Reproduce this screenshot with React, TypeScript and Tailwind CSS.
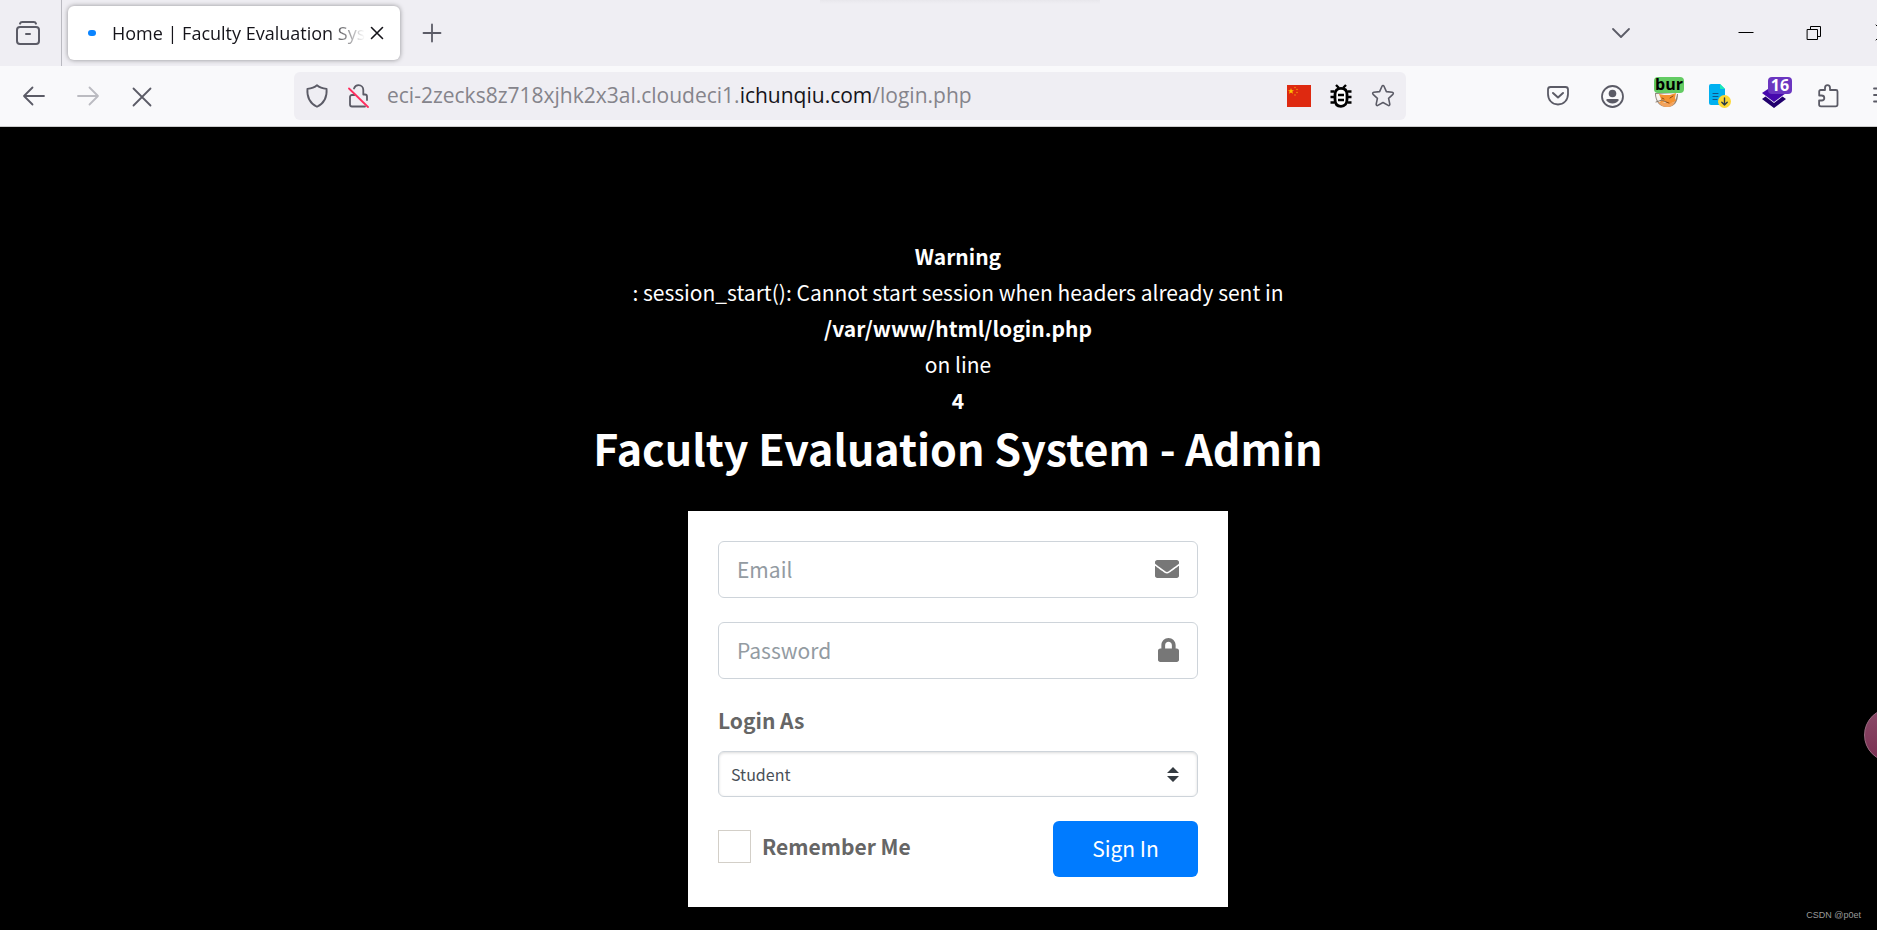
import React from "react";
import { FaEnvelope, FaLock } from "react-icons/fa";

const warningLines = [
  { text: "Warning", bold: true },
  { text: ": session_start(): Cannot start session when headers already sent in", bold: false },
  { text: "/var/www/html/login.php", bold: true },
  { text: "on line", bold: false },
  { text: "4", bold: true },
];

function Icon({ children, className = "" }: { children: React.ReactNode; className?: string }) {
  return (
    <svg
      viewBox="0 0 24 24"
      fill="none"
      stroke="currentColor"
      strokeWidth="2"
      strokeLinecap="round"
      strokeLinejoin="round"
      aria-hidden="true"
      className={`h-6 w-6 shrink-0 ${className}`}
    >
      {children}
    </svg>
  );
}

function ToolButton({ label, children }: { label: string; children: React.ReactNode }) {
  return (
    <button type="button" aria-label={label} className="relative flex h-12 w-[54px] shrink-0 items-center justify-center">
      {children}
    </button>
  );
}

function WindowButton({ label, children }: { label: string; children: React.ReactNode }) {
  return (
    <button type="button" aria-label={label} className="flex h-full w-[68px] shrink-0 items-center justify-center text-black">
      {children}
    </button>
  );
}

function TabBar() {
  return (
    <div className="flex h-[66px] items-center bg-[#efeef3] text-[#5b5b66]">
      <button type="button" aria-label="Recent browsing" className="flex h-full w-[62px] items-center border-r border-[#b9b9c0] pl-4">
        <Icon>
          <path d="M4 2.6C4.4 1.4 5 1 6.200 1h11.600c1.200 0 1.800.4 2.200 1.600" />
          <rect x="1" y="6" width="22" height="17" rx="3" />
          <path d="M10 13h4" />
        </Icon>
      </button>
      <div className="ml-1.5 flex h-[54px] w-[332px] items-center rounded-md bg-white pr-3 pl-5 shadow-[0_0_5px_rgba(0,0,0,0.4)]">
        <span className="h-1.5 w-2 shrink-0 rounded-full bg-[#0a84ff]" />
        <span className="ml-4 flex-1 bg-linear-to-r from-[#15141a] from-85% to-transparent bg-clip-text font-['Open_Sans','Noto_Sans',sans-serif] text-lg whitespace-nowrap text-transparent">
          Home | Faculty Evaluation Sys
        </span>
        <button type="button" aria-label="Close tab" className="text-[#15141a]">
          <Icon>
            <path d="M6.500 6.500l11 11M17.500 6.500l-11 11" strokeWidth="1.600" />
          </Icon>
        </button>
      </div>
      <button type="button" aria-label="New tab" className="ml-5">
        <Icon>
          <path d="M12 3.500v17M3.500 12h17" strokeWidth="1.800" />
        </Icon>
      </button>
      <div className="flex-1" />
      <div className="mr-16 flex h-full items-center">
        <ToolButton label="List all tabs">
          <Icon>
            <path d="M4 8l8 8 8-8" strokeWidth="1.800" />
          </Icon>
        </ToolButton>
      </div>
      <WindowButton label="Minimize">
        <Icon>
          <path d="M5 11.500h14" strokeWidth="1" strokeLinecap="square" />
        </Icon>
      </WindowButton>
      <WindowButton label="Restore">
        <Icon>
          <path d="M5.500 8.500h10v10h-10zM8.500 8v-2.500h10v10h-2.500" strokeWidth="1" strokeLinejoin="miter" />
        </Icon>
      </WindowButton>
      <WindowButton label="Close window">
        <Icon>
          <path d="M6 4l15 15M21 4l-15 15" strokeWidth="1" />
        </Icon>
      </WindowButton>
    </div>
  );
}

function AddressBar() {
  return (
    <div className="mx-[125px] flex h-12 flex-1 items-center rounded-md bg-[#efeef3] pr-[11px] pl-[11px]">
      <Icon className="mr-[18px]">
        <path d="M12 1.200c2.500 2.200 6 3.200 9.600 3.600.5 7-1.600 14.200-9.600 18-8-3.800-10.100-11-9.600-18C6 4.400 9.500 3.400 12 1.200z" strokeWidth="1.800" />
      </Icon>
      <Icon>
        <path d="M7 4.500C7.700 2.500 9.200 1.200 11.500 1.200c2.800 0 4.800 2 4.800 4.800v4.500h1.700c1.300 0 2 .7 2 2v3.500M7.500 11H5c-1.300 0-2 .7-2 2v7.500c0 1.300.7 2 2 2h13" strokeWidth="1.800" />
        <path d="M2 4.500l19 18.500" stroke="#ff2e5f" strokeWidth="1.800" />
      </Icon>
      {/* highlighted host over the editable field */}
      <div className="relative ml-4 h-12 flex-1 font-['Open_Sans','Noto_Sans',sans-serif] text-[21px]">
        <input aria-label="Address" className="h-full w-full bg-transparent text-transparent outline-none" />
        <div className="pointer-events-none absolute inset-0 flex items-center whitespace-nowrap text-[#85848b]">
          eci-2zecks8z718xjhk2x3al.cloudeci1.<span className="text-[#15141a]">ichunqiu.com</span>/login.php
        </div>
      </div>
      <svg viewBox="0 0 24 22" className="h-[22px] w-6 shrink-0" aria-hidden="true">
        <path d="M0 0h24v22H0z" fill="#de2910" />
        <path d="M4 3l.8 2.200H7L5.300 6.600 6 8.800 4 7.500 2 8.800l.7-2.200L1 5.200h2.200z" fill="#ffc400" />
        <g fill="#f08c10">
          <circle cx="8" cy="2.500" r=".8" />
          <circle cx="10" cy="4.500" r=".8" />
          <circle cx="10" cy="7.500" r=".8" />
          <circle cx="8" cy="10" r=".8" />
        </g>
      </svg>
      <Icon className="mx-[18px] text-black">
        <path d="M7 1l3 3M17 1l-3 3M1.500 7.500h4M18.500 7.500h4M1.500 13h4M18.500 13h4M1.500 18.500h4M18.500 18.500h4" strokeWidth="2.400" strokeLinecap="butt" />
        <path d="M12 4.300c3.900 0 6 2.400 6 6v5c0 4.300-2.200 7-6 7s-6-2.700-6-7v-5c0-3.600 2.100-6 6-6z" strokeWidth="2.800" fill="white" />
        <path d="M9 11h6M9 16h6" strokeWidth="2.400" strokeLinecap="butt" />
      </Icon>
      <Icon>
        <path d="M11 2.200c.4-.9 1.600-.9 2 0l2.400 5.400 5.900.7c1 .1 1.400 1.300.6 2l-4.300 4 1.200 5.900c.2 1-.8 1.700-1.600 1.200L12 18.500l-5.200 2.900c-.8.500-1.800-.2-1.600-1.200l1.200-5.900-4.300-4c-.8-.7-.4-1.900.6-2l5.900-.7z" strokeWidth="1.600" />
      </Icon>
    </div>
  );
}

function Toolbar() {
  return (
    <div className="flex h-[61px] items-center border-b border-[#cccccc] bg-[#f9f9fb] px-[7px] text-[#5b5b66]">
      <ToolButton label="Back">
        <Icon>
          <path d="M22 12H2M10.500 3.500L2 12l8.500 8.500" strokeWidth="1.800" />
        </Icon>
      </ToolButton>
      <ToolButton label="Forward">
        <Icon className="text-[#bbbbc1]">
          <path d="M2 12h20M13.500 3.500L22 12l-8.500 8.500" strokeWidth="1.800" />
        </Icon>
      </ToolButton>
      <ToolButton label="Stop">
        <Icon>
          <path d="M3.500 4.500l17 17M20.500 4.500l-17 17" strokeWidth="1.800" />
        </Icon>
      </ToolButton>
      <AddressBar />
      <ToolButton label="Save to Pocket">
        <Icon>
          <path d="M4.500 3h15c1.600 0 2.500.9 2.500 2.500V10c0 6-4.200 10.500-10 10.500S2 16 2 10V5.500C2 3.900 2.900 3 4.500 3z" strokeWidth="1.800" />
          <path d="M7 9l5 4.500L17 9" />
        </Icon>
      </ToolButton>
      <ToolButton label="Account">
        <Icon>
          <circle cx="12.500" cy="12.500" r="10.500" strokeWidth="1.800" />
          <circle cx="12.500" cy="9.500" r="3.800" fill="currentColor" stroke="none" />
          <path d="M7.500 15h10c1.200 0 1.500.8 1 1.600-1.300 2-3.500 3-6 3s-4.700-1-6-3c-.5-.8-.2-1.600 1-1.600z" fill="currentColor" stroke="none" />
        </Icon>
      </ToolButton>
      <ToolButton label="FoxyProxy">
        <Icon>
          <g stroke="none">
            <path d="M1 9c0 8 4 14 12 14s11-6 11-13z" fill="#8d8378" />
            <path d="M2 10c0 7 4 11 11 12 6 0 9-5 10-12z" fill="#f7f3ee" />
            <path d="M4 18c2 3 5 5 9 5s7-2 8-5l-8 1z" fill="#f2a35e" />
            <path d="M5 10l5 1h6l6-2-1 5 1 3-7 3-3-2-6 1 1-4z" fill="#f59331" />
            <path d="M2 18l6-2 4 2" stroke="#8a7a6a" strokeWidth="1" />
            <path d="M8 14l2 1M16 14l3-2M12 18l3 1" stroke="#8a4b16" strokeWidth="1" />
          </g>
        </Icon>
        <span className="absolute top-[5px] left-[15px] h-4 w-[30px] rounded-sm bg-[#63cb63] text-center font-['Open_Sans',sans-serif] text-base leading-[14px] font-bold text-black">
          bur
        </span>
      </ToolButton>
      <ToolButton label="Downloader">
        <Icon>
          <g stroke="none">
            <path d="M3 0h9l5 5v14a2 2 0 0 1-2 2H3a2 2 0 0 1-2-2V2a2 2 0 0 1 2-2z" fill="#00b0f0" />
            <path d="M12 0l5 5h-4c-.7 0-1-.3-1-1z" fill="#1de9b6" />
            <circle cx="16.500" cy="17.500" r="6.500" fill="#fdd835" />
          </g>
          <path d="M5 9.500h5M5 12.500h5M5 15.500h4" stroke="#12548a" strokeWidth="1.200" />
          <path d="M16.500 14v7M13.800 18.300l2.700 2.700 2.700-2.700" stroke="#2a3a4a" strokeWidth="1.400" />
        </Icon>
      </ToolButton>
      <ToolButton label="Wappalyzer">
        <Icon>
          <g stroke="none">
            <path d="M0 15l3.500-2.500L12 19l8.500-6.500L24 15l-12 9z" fill="#21006d" />
            <path d="M0 9l12-8 12 8-12 9z" fill="#4608ad" />
          </g>
        </Icon>
        <span className="absolute top-[5px] left-[21px] h-[17px] w-6 rounded-sm bg-[#6b36c0] text-center font-['Open_Sans',sans-serif] text-base leading-4 font-bold text-white">
          16
        </span>
      </ToolButton>
      <ToolButton label="Extensions">
        <Icon>
          <path d="M3.200 7.500c0-1 .6-1.500 1.500-1.500H9V4c0-1.800 1-2.800 2.500-2.800S14 2.200 14 4v2h6c1 0 1.500.5 1.500 1.500v13c0 1.200-.7 1.900-1.900 1.900H5c-1.200 0-1.900-.7-1.900-1.900V16.500h2.400c1.800 0 2.800-1 2.800-2.500s-1-2.500-2.800-2.500H3.200z" strokeWidth="1.800" />
        </Icon>
      </ToolButton>
      <ToolButton label="Menu">
        <Icon>
          <path d="M4 4.500h17M4 11h17M4 17.500h17" strokeWidth="1.800" />
        </Icon>
      </ToolButton>
    </div>
  );
}

function LoginField({ type, label, children }: { type: string; label: string; children: React.ReactNode }) {
  return (
    <div className="mb-6 flex h-[57px] items-center rounded-md border border-[#ced4da] px-[18px] pb-0.5 text-[#777777]">
      <input
        type={type}
        aria-label={label}
        placeholder={label}
        className="h-full min-w-0 flex-1 outline-none placeholder:text-[#939ba2]"
      />
      {children}
    </div>
  );
}

function LoginCard() {
  return (
    <form className="w-[540px] bg-white p-[30px] text-[21px] leading-9 text-[#666666]" onSubmit={(e) => e.preventDefault()}>
      <LoginField type="email" label="Email">
        <FaEnvelope className="h-6 w-6" />
      </LoginField>
      <LoginField type="password" label="Password">
        <FaLock className="h-6 w-[21px]" />
      </LoginField>
      <label htmlFor="login-as" className="mb-3.5 block leading-[34px] font-bold">
        Login As
      </label>
      <div className="relative mb-6">
        <select
          id="login-as"
          className="block h-[46px] w-full appearance-none rounded-md border border-[#ced4da] bg-white px-3 text-base text-[#495057] shadow-[inset_0_1px_3px_rgba(0,0,0,0.15)] outline-none"
        >
          <option>Student</option>
          <option>Faculty</option>
          <option>Admin</option>
        </select>
        <svg viewBox="0 0 12 15" className="pointer-events-none absolute top-4 right-[19px] h-[15px] w-3" aria-hidden="true">
          <path d="M0 6l6-6 6 6zM0 9h12l-6 6z" fill="#343a40" />
        </svg>
      </div>
      <div className="flex h-14 items-center justify-between">
        <div className="flex items-center gap-[11px] pb-1.5">
          <input id="remember" type="checkbox" className="h-[33px] w-[33px] appearance-none border border-[#d3cfc8] bg-white" />
          <label htmlFor="remember" className="font-bold">
            Remember Me
          </label>
        </div>
        <button type="submit" className="h-14 w-[145px] rounded-md bg-[#007bff] pb-0.5 text-white">
          Sign In
        </button>
      </div>
    </form>
  );
}

export default function App() {
  return (
    <div className="relative min-h-screen overflow-hidden bg-black font-['Noto_Sans_CJK_SC',sans-serif]">
      {/* the window runs a little past the right edge */}
      <div className="-mr-[39px]">
        <header className="relative">
          <TabBar />
          <Toolbar />
          <div className="absolute top-0 left-[820px] h-1 w-[280px] bg-linear-to-b from-[#e8e7ec] to-[#efeef3]" />
        </header>
        <main className="flex flex-col items-center pt-[111px] pb-[23px] text-white">
          <div className="text-center text-[21px] leading-9">
            {warningLines.map((line) => (
              <p key={line.text} className={line.bold ? "font-bold" : ""}>
                {line.text}
              </p>
            ))}
          </div>
          <h2 className="mb-[35px] text-[43px] leading-[58px] font-bold">Faculty Evaluation System - Admin</h2>
          <LoginCard />
        </main>
      </div>
      <div className="absolute top-[708px] -right-[41px] h-[54px] w-[54px] rounded-full border border-[#9a6a80] bg-linear-to-b from-[#8a4a68] to-[#7a2f52]" />
      <p className="absolute right-4 bottom-2 font-['Liberation_Sans',sans-serif] text-[9px] text-[#9a9a9a]">CSDN @p0et</p>
    </div>
  );
}
